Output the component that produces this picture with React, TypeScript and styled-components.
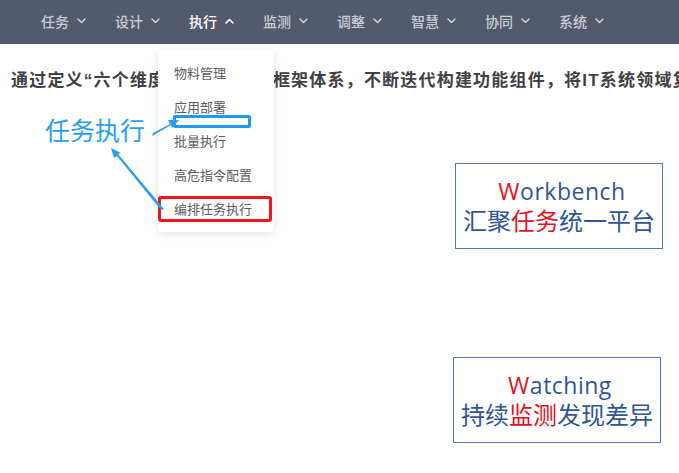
import React from 'react';
import styled, { createGlobalStyle } from 'styled-components';

const GlobalStyle = createGlobalStyle`
	html, body {
		margin: 0;
		padding: 0;
		background: #ffffff;
	}
	body {
		font-family: 'Noto Sans CJK SC', 'Noto Sans', sans-serif;
		width: 679px;
		height: 473px;
		overflow: hidden;
	}
`;

const navItems = ['任务', '设计', '执行', '监测', '调整', '智慧', '协同', '系统'];
const menuItems = ['物料管理', '应用部署', '批量执行', '高危指令配置', '编排任务执行'];

const Page = styled.div`
	position: relative;
	width: 679px;
	height: 473px;
	overflow: hidden;
`;

const NavBar = styled.nav`
	display: flex;
	height: 44px;
	padding-left: 41px;
	background: #535a6d;
`;

const NavItem = styled.div<{ active?: boolean }>`
	position: relative;
	display: flex;
	align-items: center;
	gap: 8px;
	width: 74px;
	height: 100%;
	padding-bottom: 3px;
	box-sizing: border-box;
	font-size: 14px;
	font-weight: 500;
	color: ${props => (props.active ? '#ffffff' : '#c9ccd3')};
	cursor: pointer;
`;

const Dropdown = styled.ul`
	position: absolute;
	top: 50px;
	left: -31px;
	width: 116px;
	margin: 0;
	padding: 6px 0;
	list-style: none;
	background: #ffffff;
	border-radius: 4px;
	box-shadow: 0 2px 10px rgba(0, 0, 0, 0.12);
	z-index: 5;
`;

const MenuItem = styled.li<{ marked?: boolean }>`
	position: relative;
	height: 34px;
	line-height: 34px;
	padding-left: 16px;
	font-size: 13px;
	font-weight: 400;
	color: #595c63;
	white-space: nowrap;

	${props =>
		props.marked &&
		`
		&::after {
			content: '';
			position: absolute;
			left: 0;
			top: 4px;
			width: 114px;
			height: 26px;
			box-sizing: border-box;
			border: 3px solid #f2141a;
			border-radius: 3px;
		}
	`}
`;

const Main = styled.main`
	display: flex;
	flex-direction: column;
`;

const Heading = styled.h2`
	margin: 25px 0 0;
	padding-left: 11px;
	height: 24px;
	line-height: 24px;
	font-family: 'Liberation Sans', 'Noto Sans CJK SC', sans-serif;
	font-size: 17px;
	font-weight: 700;
	letter-spacing: 1.2px;
	color: #3f4146;
	white-space: nowrap;
	overflow: hidden;
`;

const CardColumn = styled.div`
	display: flex;
	flex-direction: column;
	align-items: flex-end;
	gap: 108px;
	padding: 70px 16px 0 0;
`;

const Card = styled.div<{ shift?: number }>`
	display: flex;
	flex-direction: column;
	align-items: center;
	justify-content: center;
	width: 208px;
	height: 86px;
	margin-right: ${props => props.shift || 0}px;
	box-sizing: border-box;
	border: 1.5px solid #5676b6;
	background: #ffffff;
	color: #2f5597;
`;

const CardTitle = styled.div`
	font-family: 'Open Sans', 'Liberation Sans', sans-serif;
	font-size: 23px;
	line-height: 28px;
	letter-spacing: 0.5px;
	padding-left: 6px;
`;

const CardSubtitle = styled.div`
	font-family: 'Noto Sans CJK SC', sans-serif;
	font-size: 24px;
	line-height: 30px;
`;

const Red = styled.span`
	color: #e3131d;
`;

const Label = styled.div`
	position: absolute;
	left: 45px;
	top: 113px;
	font-size: 25px;
	line-height: 32px;
	color: #259ff2;
`;

const MarkBox = styled.div`
	position: absolute;
	left: 173px;
	top: 115px;
	width: 78px;
	height: 13px;
	box-sizing: border-box;
	border: 3px solid #1e9af5;
	border-radius: 2px;
	z-index: 6;
`;

const ArrowLayer = styled.svg`
	position: absolute;
	left: 0;
	top: 0;
	width: 679px;
	height: 473px;
	pointer-events: none;
	z-index: 7;
`;

const Chevron = ({ up }: { up?: boolean }) => (
	<svg width='9' height='6' viewBox='0 0 9 6'>
		<path
			d={up ? 'M1 5 L4.5 1.5 L8 5' : 'M1 1 L4.5 4.5 L8 1'}
			fill='none'
			stroke='currentColor'
			strokeWidth='1.6'
			strokeLinecap='round'
			strokeLinejoin='round'
		/>
	</svg>
);

const App = () => (
	<Page>
		<GlobalStyle />
		<NavBar>
			{navItems.map(name => (
				<NavItem key={name} active={name === '执行'}>
					{name}
					<Chevron up={name === '执行'} />
					{name === '执行' && (
						<Dropdown>
							{menuItems.map((item, i) => (
								<MenuItem key={item} marked={i === menuItems.length - 1}>
									{item}
								</MenuItem>
							))}
						</Dropdown>
					)}
				</NavItem>
			))}
		</NavBar>
		<Main>
			<Heading>
				通过定义“六个维度” 一体化运维框架体系，不断迭代构建功能组件，将IT系统领域复杂的运维工作标准化
			</Heading>
			<CardColumn>
				<Card>
					<CardTitle>
						<Red>W</Red>orkbench
					</CardTitle>
					<CardSubtitle>
						汇聚<Red>任务</Red>统一平台
					</CardSubtitle>
				</Card>
				<Card shift={2}>
					<CardTitle>
						<Red>W</Red>atching
					</CardTitle>
					<CardSubtitle>
						持续<Red>监测</Red>发现差异
					</CardSubtitle>
				</Card>
			</CardColumn>
		</Main>
		<Label>任务执行</Label>
		<MarkBox />
		<ArrowLayer viewBox='0 0 679 473'>
			<polygon points='152,136 153,133 170,124 168,120 179,120 172,128 171,125' fill='#2a9cf2' />
			<polygon points='164,209 161,210 117,156 114,158 111,148 121,153 118,154' fill='#2a9cf2' />
		</ArrowLayer>
	</Page>
);

export default App;
